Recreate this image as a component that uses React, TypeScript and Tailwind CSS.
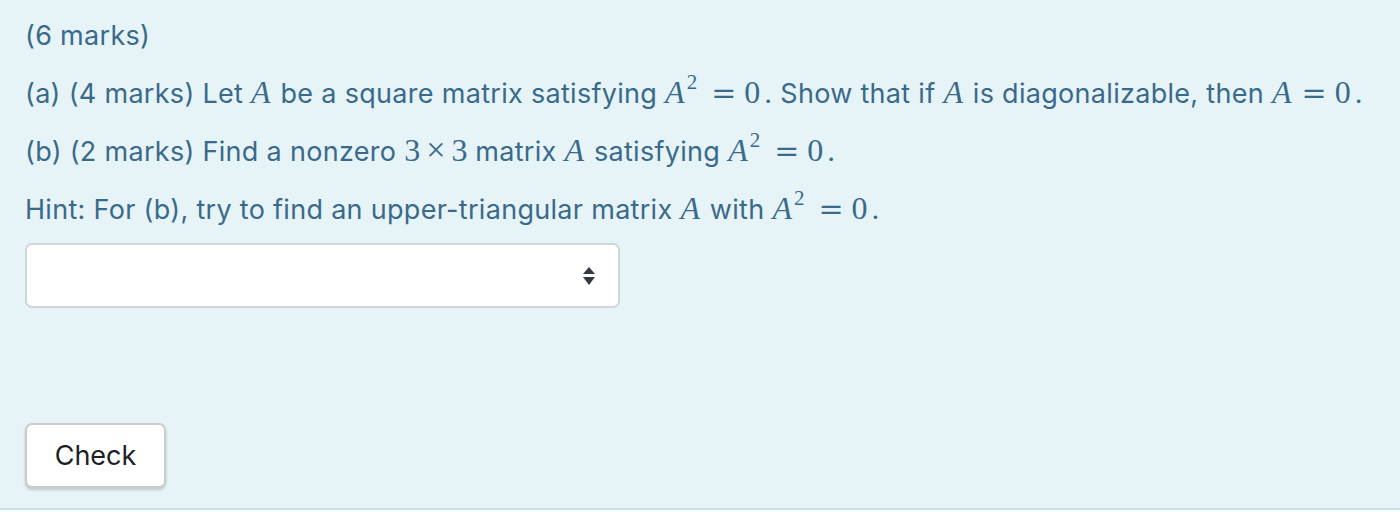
import React from "react";

function M({ children }: { children: React.ReactNode }) {
  return (
    <span
      className="text-[32px] leading-none tracking-normal"
      style={{ fontFamily: "'Liberation Serif', 'DejaVu Serif', serif" }}
    >
      {children}
    </span>
  );
}

function A() {
  return <i className="mr-[2px]">A</i>;
}

function Eq() {
  return (
    <span className="mx-[8px] text-[30px]" style={{ fontFamily: "'DejaVu Serif', serif" }}>
      =
    </span>
  );
}

function Sq() {
  return (
    <>
      <A />
      <sup className="text-[21px] leading-none -top-[14px] mr-[6px]">2</sup>
      <Eq />0
    </>
  );
}

export default function App() {
  return (
    <div className="w-[1400px] h-[516px] bg-white">
      <div
        className="bg-[#e7f4f7] border-b-[2px] border-[#c6e3ea] pl-[25px] pt-[16px] pb-[20px] text-[#3a6a8b] text-[27px] leading-[40px] tracking-[0.3px]"
        style={{ fontFamily: "Inter, 'Liberation Sans', Arial, sans-serif" }}
      >
        <p className="mb-[18px]">(6 marks)</p>
        <p className="mb-[18px]">
          (a) (4 marks) Let <M><A /></M> be a square matrix satisfying{" "}
          <M>
            <Sq />
          </M>
          <span className="ml-[4px]">.</span> Show that if <M><A /></M> is diagonalizable, then{" "}
          <M>
            <A />
            <Eq />0
          </M>
          <span className="ml-[4px]">.</span>
        </p>
        <p className="mb-[18px]">
          (b) (2 marks) Find a nonzero{" "}
          <M>
            3<span className="mx-[6px] text-[34px]">×</span>3
          </M>{" "}
          matrix <M><A /></M> satisfying{" "}
          <M>
            <Sq />
          </M>
          <span className="ml-[4px]">.</span>
        </p>
        <p className="mb-[13px]">
          Hint: For (b), try to find an upper-triangular matrix <M><A /></M> with{" "}
          <M>
            <Sq />
          </M>
          <span className="ml-[4px]">.</span>
        </p>
        <div className="w-[595px] h-[65px] bg-white border-[2px] border-[#cfd6db] rounded-[7px] flex items-center justify-end pr-[22px]">
          <svg width="14" height="20" viewBox="0 0 14 20">
            <path d="M7 1 L13 8 L1 8 Z" fill="#343a40" />
            <path d="M1 11 L13 11 L7 19 Z" fill="#343a40" />
          </svg>
        </div>
        <div className="mt-[115px]">
          <button className="w-[141px] h-[65px] bg-white border-[2px] border-[#cccccc] rounded-[7px] shadow-[0_2px_3px_rgba(0,0,0,0.18)] text-[#1d2125] text-[27px] tracking-normal">
            Check
          </button>
        </div>
      </div>
    </div>
  );
}
